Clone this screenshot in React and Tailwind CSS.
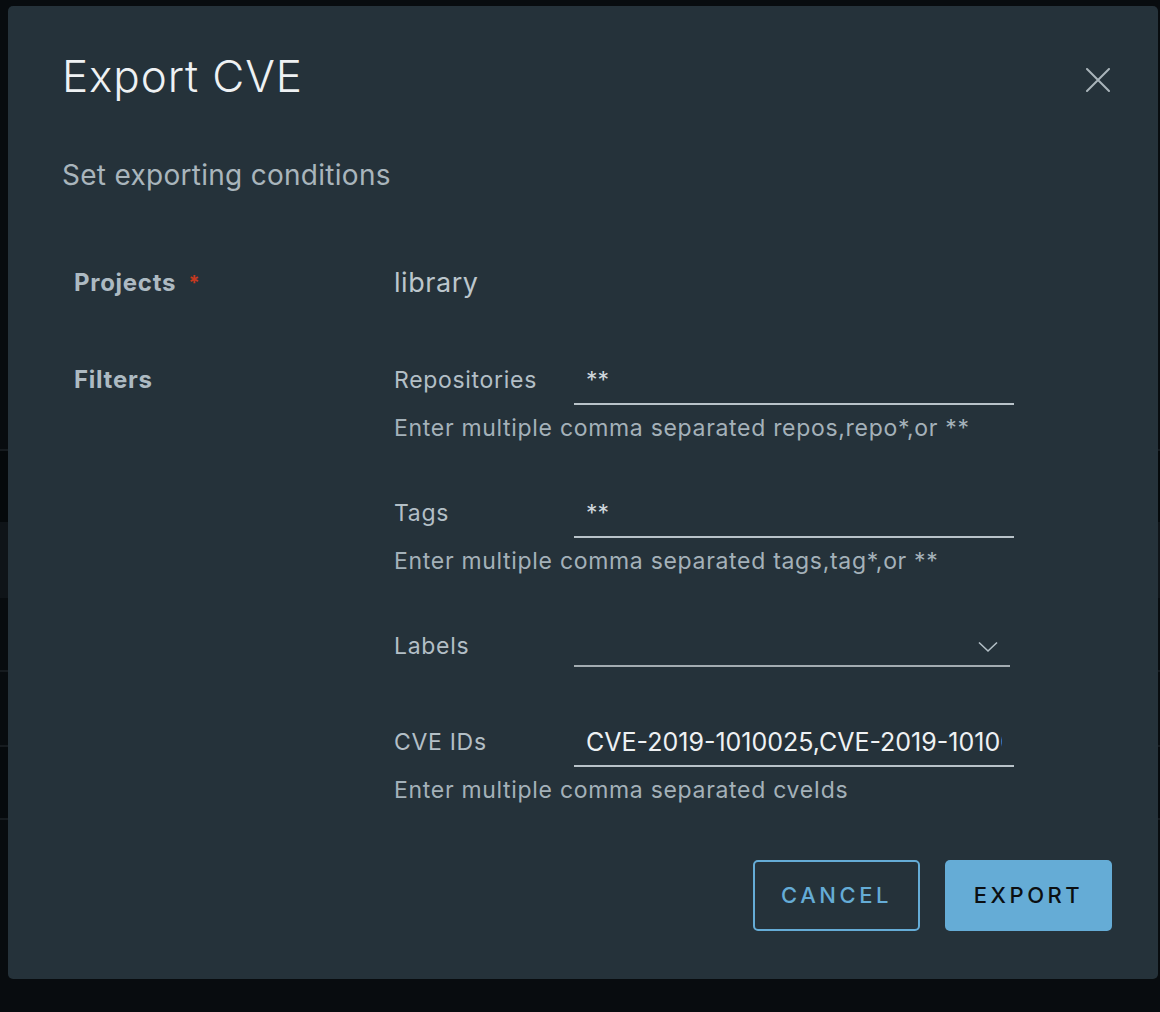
import React from "react";

const font = { fontFamily: "Inter, 'Noto Sans', sans-serif" };

function Field({ label, value, help, valueClass = "text-[#cfd7dc]" }) {
  return (
    <div>
      <div className="flex items-start">
        <div className="w-[180px] h-[34px] leading-[34px] text-[23px] tracking-[0.03em] text-[#b3bfc6]">{label}</div>
        <div className="w-[440px] h-[42px] border-b-2 border-[#b9c3c9] pl-[12px] pr-[12px]">
          <span className={`block overflow-hidden whitespace-nowrap leading-[34px] text-[23px] ${valueClass}`}>{value}</span>
        </div>
      </div>
      {help && (
        <div className="mt-[8px] h-[30px] leading-[30px] text-[23px] tracking-[0.03em] text-[#a4b1b9] whitespace-nowrap">{help}</div>
      )}
    </div>
  );
}

export default function App() {
  return (
    <div className="relative w-[1160px] h-[1012px] bg-[#080c0f] overflow-hidden" style={font}>
      {/* background page rows */}
      <div className="flex flex-col">
        <div className="h-[449px]" />
        <div className="h-[73px] border-t-2 border-[#161b1f] bg-[#05090b]" />
        <div className="h-[76px] bg-[#0f1418]" />
        <div className="h-[72px] bg-[#080c0f]" />
        <div className="h-[75px] border-t-2 border-[#161b1f] bg-[#080c0f]" />
        <div className="h-[73px] border-t-2 border-[#161b1f] bg-[#060a0d]" />
        <div className="h-[73px] border-t-2 border-[#161b1f] bg-[#080c0f]" />
      </div>

      {/* modal */}
      <div className="absolute left-[8px] top-[6px] w-[1150px] h-[973px] rounded-[5px] bg-[#25323a] flex flex-col">
        <div className="flex items-start justify-between pl-[54px] pr-[48px] pt-[44px]">
          <div className="h-[52px] leading-[52px] text-[44px] font-light tracking-[0.02em] text-[#eef1f3]">Export CVE</div>
          <button className="mt-[18px] w-[24px] h-[24px] text-[#a9b4ba]">
            <svg viewBox="0 0 24 24" width="24" height="24" fill="none" stroke="currentColor" strokeWidth="2" strokeLinecap="round">
              <path d="M1 1 L23 23 M23 1 L1 23" />
            </svg>
          </button>
        </div>

        <div className="pl-[54px] mt-[56px] h-[34px] leading-[34px] text-[28px] tracking-[0.01em] text-[#a9b5bc]">
          Set exporting conditions
        </div>

        <div className="pl-[66px] mt-[74px]">
          <div className="grid grid-cols-[320px_1fr] items-start">
            <div className="h-[34px] leading-[34px] text-[24px] font-bold tracking-[0.03em] text-[#adbac2]">
              Projects <span className="text-[#c5391f] text-[20px] align-top ml-[6px]">*</span>
            </div>
            <div className="h-[34px] leading-[34px] text-[27px] tracking-[0.02em] text-[#bcc6cc]">library</div>
          </div>

          <div className="grid grid-cols-[320px_1fr] items-start mt-[63px]">
            <div className="h-[34px] leading-[34px] text-[24px] font-bold tracking-[0.03em] text-[#adbac2]">Filters</div>
            <div className="flex flex-col">
              <Field label="Repositories" value="**" help="Enter multiple comma separated repos,repo*,or **" />
              <div className="mt-[53px]">
                <Field label="Tags" value="**" help="Enter multiple comma separated tags,tag*,or **" />
              </div>
              <div className="mt-[53px] flex items-start">
                <div className="w-[180px] h-[34px] leading-[34px] text-[23px] tracking-[0.03em] text-[#b3bfc6]">Labels</div>
                <div className="w-[436px] h-[38px] border-b-2 border-[#a3acb1] flex items-start justify-end pr-[12px]">
                  <svg className="mt-[12px]" width="20" height="12" viewBox="0 0 20 12" fill="none" stroke="#b3bfc6" strokeWidth="1.6">
                    <path d="M1 1.5 L10 10 L19 1.5" />
                  </svg>
                </div>
              </div>
              <div className="mt-[58px]">
                <Field
                  label="CVE IDs"
                  value="CVE-2019-1010025,CVE-2019-1010023"
                  valueClass="text-[#eef1f3] text-[25px]"
                  help="Enter multiple comma separated cveIds"
                />
              </div>
            </div>
          </div>
        </div>

        <div className="mt-[55px] flex justify-end gap-[25px] pr-[46px]">
          <button className="w-[167px] h-[71px] rounded-[5px] border-2 border-[#65acd6] text-[#65acd6] text-[22px] font-medium tracking-[0.16em]">
            CANCEL
          </button>
          <button className="w-[167px] h-[71px] rounded-[5px] bg-[#65acd6] text-[#0b0f12] text-[22px] font-medium tracking-[0.16em]">
            EXPORT
          </button>
        </div>
      </div>
    </div>
  );
}
